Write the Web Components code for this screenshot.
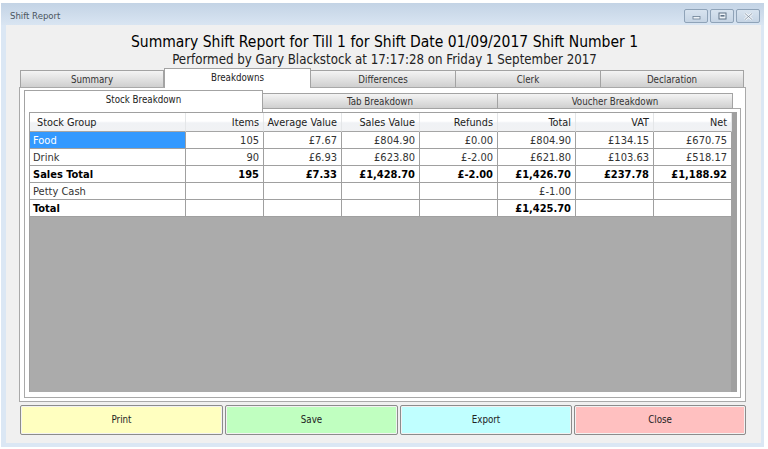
<!DOCTYPE html>
<html>
<head>
<meta charset="utf-8">
<title>Shift Report</title>
<style>
  html, body { margin: 0; padding: 0; background: #fff; height: 449px; overflow: hidden; }
  body { font-family: "DejaVu Sans Condensed", "DejaVu Sans", sans-serif; font-stretch: condensed; color: #111; }
</style>
</head>
<body>
<shift-window caption="Shift Report">
  <report-heading
    title-text="Summary Shift Report for Till 1 for Shift Date 01/09/2017 Shift Number 1"
    sub-text="Performed by Gary Blackstock at 17:17:28 on Friday 1 September 2017"></report-heading>
  <main-tabs></main-tabs>
  <action-bar></action-bar>
</shift-window>

<script>
const mainTabs = ['Summary', 'Breakdowns', 'Differences', 'Clerk', 'Declaration'];
const subTabs = ['Stock Breakdown', 'Tab Breakdown', 'Voucher Breakdown'];

const columns = ['Stock Group', 'Items', 'Average Value', 'Sales Value', 'Refunds', 'Total', 'VAT', 'Net'];
const rows = [
  { cells: ['Food', '105', '£7.67', '£804.90', '£0.00', '£804.90', '£134.15', '£670.75'], selected: true },
  { cells: ['Drink', '90', '£6.93', '£623.80', '£-2.00', '£621.80', '£103.63', '£518.17'] },
  { cells: ['Sales Total', '195', '£7.33', '£1,428.70', '£-2.00', '£1,426.70', '£237.78', '£1,188.92'], bold: true },
  { cells: ['Petty Cash', '', '', '', '', '£-1.00', '', ''] },
  { cells: ['Total', '', '', '', '', '£1,425.70', '', ''], bold: true }
];

const buttons = [
  { label: 'Print', color: '#ffffc0' },
  { label: 'Save', color: '#c0ffc0' },
  { label: 'Export', color: '#c0ffff' },
  { label: 'Close', color: '#ffc0c0' }
];

class ShiftWindow extends HTMLElement {
  connectedCallback() {
    const caption = this.getAttribute('caption') || '';
    this.attachShadow({ mode: 'open' }).innerHTML = `
      <style>
        :host {
          display: flex;
          flex-direction: column;
          box-sizing: border-box;
          width: 763px;
          height: 444px;
          margin: 3px 0 0 1px;
          padding: 0 3px 4px 5px;
          background: #dbe7f4;
        }
        .bar {
          display: flex;
          justify-content: space-between;
          height: 22px;
          flex: none;
          margin: 0 -3px 0 -5px;
          padding: 0 4px 0 9px;
          background: linear-gradient(#c3d3e5, #d9e5f2);
          font-size: 9.5px;
          line-height: 26px;
          color: #4a5560;
        }
        .btns { display: flex; gap: 2px; margin-top: 6px; height: 14px; }
        .btns span {
          display: flex;
          align-items: center;
          justify-content: center;
          box-sizing: border-box;
          width: 24px;
          height: 14px;
          border: 1px solid #8fa3b8;
          border-radius: 2px;
          background: linear-gradient(#d7e3ef, #c5d4e4);
        }
        .client {
          flex: 1;
          display: flex;
          flex-direction: column;
          background: #f0f0f0;
          padding: 0 14px 0 13px;
          min-height: 0;
        }
      </style>
      <div class="bar">
        <span>${caption}</span>
        <div class="btns">
          <span><svg width="9" height="7" viewBox="0 0 9 7"><rect x="1" y="3.5" width="7" height="2.5" fill="#eef3f8" stroke="#6c7f93" stroke-width="0.8"/></svg></span>
          <span><svg width="9" height="8" viewBox="0 0 9 8"><rect x="1" y="1" width="7" height="6" fill="#eef3f8" stroke="#5f7286" stroke-width="1"/><rect x="2.5" y="3" width="4" height="1.6" fill="#5f7286"/></svg></span>
          <span><svg width="11" height="9" viewBox="0 0 11 9"><path d="M2 1.5 L9 7.5 M9 1.5 L2 7.5" stroke="#f4f7fa" stroke-width="2.4"/><path d="M2 1.5 L9 7.5 M9 1.5 L2 7.5" stroke="#7d8ea0" stroke-width="0.8"/></svg></span>
        </div>
      </div>
      <div class="client"><slot></slot></div>`;
  }
}

class ReportHeading extends HTMLElement {
  connectedCallback() {
    this.attachShadow({ mode: 'open' }).innerHTML = `
      <style>
        :host { display: block; text-align: center; padding: 8px 0 0 3px; height: 34px; flex: none; white-space: nowrap; }
        .t { font-size: 15.5px; line-height: 19px; color: #000; }
        .s { font-size: 13.2px; line-height: 16px; color: #222; }
      </style>
      <div class="t">${this.getAttribute('title-text')}</div>
      <div class="s">${this.getAttribute('sub-text')}</div>`;
  }
}

class MainTabs extends HTMLElement {
  connectedCallback() {
    const tabs = mainTabs.map((t, i) => `<div class="tab${i === 1 ? ' on' : ''}">${t}</div>`).join('');
    this.attachShadow({ mode: 'open' }).innerHTML = `
      <style>
        :host { display: block; flex: none; font-size: 9.7px; }
        .strip {
          display: grid;
          grid-template-columns: 144px 147px 145px 145px 143px;
          align-items: end;
          height: 20px;
          margin-left: 1px;
          position: relative;
          z-index: 1;
        }
        .tab {
          box-sizing: border-box;
          height: 17px;
          line-height: 17px;
          text-align: center;
          color: #333;
          border: 1px solid #a3a3a3;
          border-bottom: none;
          border-left-width: 0;
          background: linear-gradient(#f4f4f4, #cfcfcf);
        }
        .tab:first-child { border-left-width: 1px; }
        .tab.on {
          height: 20px;
          margin-bottom: -1px;
          background: #fff;
          line-height: 17px;
          color: #222;
          border-left-width: 1px;
        }
        .panel {
          box-sizing: border-box;
          width: 727px;
          height: 315px;
          background: #fff;
          border: 1px solid #a9a9a9;
          padding: 2px 4px 3px 4px;
          display: flex;
          flex-direction: column;
        }
        .sub {
          display: grid;
          grid-template-columns: 239px 235px 235px;
          align-items: start;
          height: 18px;
          flex: none;
          position: relative;
          z-index: 1;
        }
        .sub div {
          box-sizing: border-box;
          height: 16px;
          margin-top: 3px;
          line-height: 15px;
          text-align: center;
          color: #333;
          border: 1px solid #a3a3a3;
          border-left-width: 0;
          background: linear-gradient(#f4f4f4, #cfcfcf);
        }
        .sub div.on {
          height: 22px;
          margin-top: 0;
          background: #fff;
          border-left-width: 1px;
          border-bottom: none;
          line-height: 17px;
          color: #222;
        }
        .body {
          flex: 1;
          min-height: 0;
          box-sizing: border-box;
          border: 1px solid #a9a9a9;
          padding: 3px 3px 5px 4px;
          background: #fff;
        }
      </style>
      <div class="strip">${tabs}</div>
      <div class="panel">
        <div class="sub">${subTabs.map((t, i) => `<div class="${i === 0 ? 'on' : ''}">${t}</div>`).join('')}</div>
        <div class="body"><stock-grid></stock-grid></div>
      </div>`;
  }
}

class StockGrid extends HTMLElement {
  connectedCallback() {
    const head = columns.map((c, i) => `<div class="h${i === 0 ? ' first' : ''}">${c}</div>`).join('');
    const body = rows.map(r => r.cells.map((c, i) => {
      const cls = ['c'];
      if (i === 0) cls.push('first');
      if (r.bold) cls.push('b');
      if (r.selected && i === 0) cls.push('sel');
      return `<div class="${cls.join(' ')}">${c}</div>`;
    }).join('')).join('');
    this.attachShadow({ mode: 'open' }).innerHTML = `
      <style>
        :host {
          display: block;
          box-sizing: border-box;
          height: 100%;
          background: #ababab;
          border: solid #a0a0a0;
          border-width: 1px 6px 0 1px;
          font-size: 10.8px;
        }
        .grid {
          display: grid;
          grid-template-columns: 156px repeat(7, 78px);
          grid-template-rows: 19px;
          grid-auto-rows: 17px;
          width: 702px;
        }
        .h {
          box-sizing: border-box;
          line-height: 19px;
          padding-right: 4px;
          text-align: right;
          color: #222;
          white-space: nowrap;
          background: linear-gradient(#fff 0, #fff 45%, #f0f2f5 55%, #f1f2f4);
          border-right: 1px solid #e4e6e8;
          border-bottom: 1px solid #a5a5a5;
        }
        .h.first { text-align: left; padding-left: 7px; }
        .c {
          box-sizing: border-box;
          padding: 2px 4px 0 3px;
          font-size: 11px;
          line-height: 14px;
          text-align: right;
          background: #fff;
          color: #333;
          border-right: 1px solid #a0a0a0;
          border-bottom: 1px solid #a0a0a0;
          white-space: nowrap;
        }
        .c.first { text-align: left; }
        .c.b { font-weight: bold; color: #000; }
        .c.sel { background: #3399ff; color: #fff; }
      </style>
      <div class="grid">${head}${body}</div>`;
  }
}

class ActionButton extends HTMLElement {
  connectedCallback() {
    this.attachShadow({ mode: 'open' }).innerHTML = `
      <style>
        :host {
          display: flex;
          align-items: center;
          justify-content: center;
          box-sizing: border-box;
          height: 30px;
          font-size: 9.7px;
          color: #222;
          background: var(--bg);
          border: 1px solid #8c8c8c;
          border-radius: 2px;
          box-shadow: inset 0 0 0 1px #f2f2f2;
          padding-bottom: 1px;
        }
      </style>
      <slot></slot>`;
  }
}

class ActionBar extends HTMLElement {
  connectedCallback() {
    this.attachShadow({ mode: 'open' }).innerHTML = `
      <style>
        :host {
          display: grid;
          grid-template-columns: 203px 173px 172px 172px;
          gap: 2px;
          margin: 3px 0 0 1px;
          flex: none;
        }
      </style>
      ${buttons.map(b => `<action-button style="--bg:${b.color}">${b.label}</action-button>`).join('')}`;
  }
}

customElements.define('shift-window', ShiftWindow);
customElements.define('report-heading', ReportHeading);
customElements.define('main-tabs', MainTabs);
customElements.define('stock-grid', StockGrid);
customElements.define('action-button', ActionButton);
customElements.define('action-bar', ActionBar);
</script>
</body>
</html>
